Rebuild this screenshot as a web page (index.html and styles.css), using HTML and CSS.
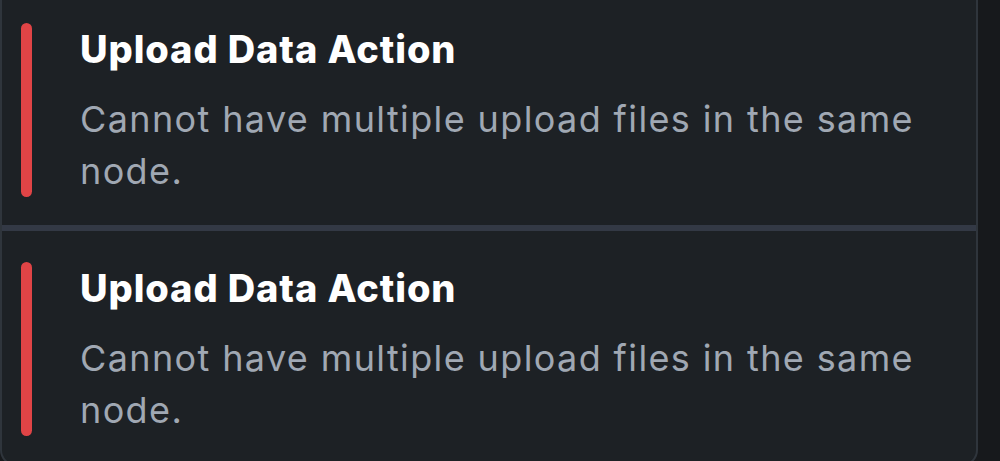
FILE: index.html
```html
<!DOCTYPE html>
<html lang="en">
<head>
<meta charset="utf-8">
<title>Errors</title>
<link rel="stylesheet" href="styles.css">
</head>
<body>
<div class="panel">
  <div class="item">
    <div class="bar"></div>
    <div class="content">
      <div class="title">Upload Data Action</div>
      <div class="desc">Cannot have multiple upload files in the same node.</div>
    </div>
  </div>
  <div class="divider"></div>
  <div class="item">
    <div class="bar"></div>
    <div class="content">
      <div class="title">Upload Data Action</div>
      <div class="desc">Cannot have multiple upload files in the same node.</div>
    </div>
  </div>
</div>
</body>
</html>
```
FILE: styles.css
```css
html, body {
  margin: 0;
  padding: 0;
  height: 461px;
  overflow: hidden;
  background: #17191c;
  font-family: "Inter", "Noto Sans", sans-serif;
  font-variant-ligatures: none;
}
.panel {
  width: 974px;
  margin-top: -8px;
  background: #1d2125;
  border: 2px solid #2f353c;
  border-top: none;
  border-radius: 0 0 16px 16px;
}
.item {
  display: flex;
  padding: 31px 0 28px 19px;
  gap: 48px;
}
.bar {
  width: 11px;
  flex: none;
  background: #e04446;
  border-radius: 6px;
}
.content {
  width: 860px;
}
.title {
  color: #ffffff;
  font-weight: 800;
  font-size: 38px;
  line-height: 52px;
  margin-bottom: 18px;
  letter-spacing: 0.9px;
}
.desc {
  color: #a0a8b3;
  font-size: 36px;
  line-height: 52px;
  letter-spacing: 1.38px;
}
.divider {
  height: 6px;
  background: #333945;
}
```
